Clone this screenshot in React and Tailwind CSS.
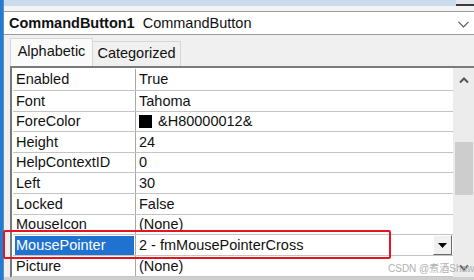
import React from "react";

const rows = [
  { name: "Enabled", value: "True", h: "h-[22px]" },
  { name: "Font", value: "Tahoma", h: "h-[21px]" },
  { name: "ForeColor", value: "&H80000012&", h: "h-[20px]", swatch: true },
  { name: "Height", value: "24", h: "h-[21px]" },
  { name: "HelpContextID", value: "0", h: "h-[20px]" },
  { name: "Left", value: "30", h: "h-[21px]" },
  { name: "Locked", value: "False", h: "h-[21px]" },
  { name: "MouseIcon", value: "(None)", h: "h-[20px]" },
  { name: "MousePointer", value: "2 - fmMousePointerCross", h: "h-[21px]", selected: true },
  { name: "Picture", value: "(None)", h: "h-[21px]" },
];

function Row({ r }) {
  return (
    <div className={`flex ${r.h} border-b border-[#c4c4c4] text-[14.5px] leading-none text-[#111]`}>
      <div className="w-[123px] shrink-0 border-r border-[#a8a8a8] flex items-center pl-[2px] pr-[1px]">
        {r.selected ? (
          <div className="w-full h-[19px] bg-[#1f72cf] text-white flex items-center pl-[1px]">{r.name}</div>
        ) : (
          <span className="pl-[1px]">{r.name}</span>
        )}
      </div>
      <div className="flex-1 flex items-center pl-[3px]">
        {r.selected ? (
          <div className="flex-1 flex items-center h-full">
            <span className="flex-1">{r.value}</span>
            <div className="w-[19px] h-[20px] mr-[1px] bg-[#f0f0f0] border border-t-white border-l-white border-r-[#6a6a6a] border-b-[#6a6a6a] flex items-center justify-center">
              <svg width="9" height="5" viewBox="0 0 9 5"><path d="M0 0h9L4.5 5z" fill="#000" /></svg>
            </div>
          </div>
        ) : (
          <>
            {r.swatch && <span className="w-[13px] h-[13px] bg-black mr-[6px] shrink-0" />}
            <span>{r.value}</span>
          </>
        )}
      </div>
    </div>
  );
}

export default function App() {
  return (
    <div
      className="relative w-[474px] h-[280px] overflow-hidden bg-[#f0f0f0] flex"
      style={{ fontFamily: '"Liberation Sans", Arial, sans-serif' }}
    >
      <div className="w-[3px] bg-[#1e7dd6] shrink-0" />
      <div className="w-[1px] bg-[#6f8aa6] shrink-0" />
      <div className="flex-1 flex flex-col min-w-0">
        <div className="h-[6px] bg-[#c9dbed] flex justify-end shrink-0">
          <div className="w-[18px] h-[6px] bg-[#e4e8ec] border-b-2 border-[#3a3a3a]" />
        </div>
        <div className="h-[5px] bg-[#f4f4f4] shrink-0" />
        <div className="h-[24px] bg-white border-t border-b border-[#9c9c9c] flex items-center pl-[5px] pr-[4px] pt-[2px] shrink-0 text-[14.5px] text-[#111]">
          <span className="font-bold">CommandButton1</span>
          <span className="ml-[8px] flex-1">CommandButton</span>
          <svg width="11" height="7" viewBox="0 0 11 7" className="mr-[1px]"><path d="M0.5 0.8L5.5 5.8L10.5 0.8" fill="none" stroke="#555" strokeWidth="1.2" /></svg>
        </div>
        <div className="h-[31px] flex items-end pl-[6px] shrink-0 text-[14.5px] text-[#111]">
          <div className="h-[28px] w-[83px] bg-[#fafafa] border border-b-0 border-[#d6d6d6] flex items-center justify-center pb-[2px]">Alphabetic</div>
          <div className="h-[25px] w-[88px] bg-[#f0f0f0] border border-l-0 border-b-0 border-[#d6d6d6] flex items-center justify-center">Categorized</div>
        </div>
        <div className="flex-1 ml-[6px] border-t-2 border-l-2 border-t-[#7a7a7a] border-l-[#7a7a7a] bg-white flex min-h-0">
          <div className="flex-1 flex flex-col pl-[1px] pt-[1px]">
            {rows.map((r) => (
              <Row key={r.name} r={r} />
            ))}
          </div>
          <div className="w-[21px] shrink-0 bg-[#ececec] flex flex-col items-center relative">
            <svg width="10" height="7" viewBox="0 0 10 7" className="mt-[9px]"><path d="M1 5.5L5 1.5L9 5.5" fill="none" stroke="#555" strokeWidth="2" /></svg>
            <div className="w-[18px] h-[53px] bg-[#cdcdcd] mt-[58px]" />
            <svg width="10" height="7" viewBox="0 0 10 7" className="mt-auto mb-[6px]"><path d="M1 1.5L5 5.5L9 1.5" fill="none" stroke="#555" strokeWidth="2" /></svg>
          </div>
        </div>
        <div className="h-[3px] bg-[#cfcfcf] shrink-0" />
      </div>
      <div className="absolute left-[3px] top-[230px] w-[388px] h-[29px] border-2 border-[#e3161f] rounded-[2px]" />
      <div
        className="absolute left-[388px] top-[264px] z-10 whitespace-nowrap text-[10px] leading-none text-[#b0b0b0]"
        style={{ fontFamily: '"Liberation Sans", "Noto Sans CJK SC", sans-serif' }}
      >
        CSDN @煮酒Shaw
      </div>
    </div>
  );
}
